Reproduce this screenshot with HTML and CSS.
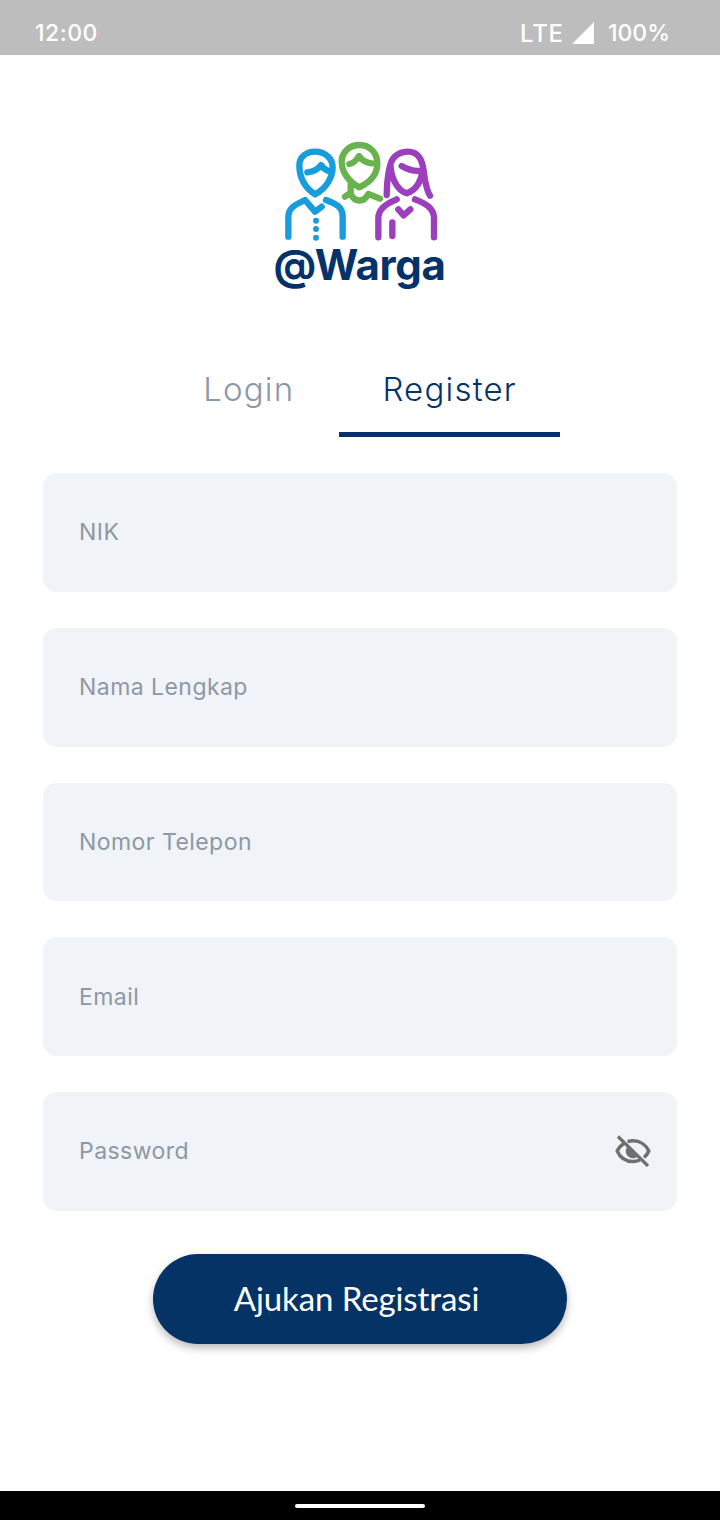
FILE: index.html
```html
<!DOCTYPE html>
<html lang="id">
<head>
<meta charset="utf-8">
<title>@Warga</title>
<link rel="stylesheet" href="styles.css">
</head>
<body>
<div class="screen">
  <header class="status">
    <span class="time">12:00</span>
    <div class="status-right">
      <span class="lte">LTE</span>
      <svg class="signal" viewBox="0 0 22 22"><path d="M22 0V22H0Z"/></svg>
      <span>100%</span>
    </div>
  </header>
  <main class="main">
    <div class="logo">
      <svg class="logo-art" viewBox="0 0 600 345" fill="none" stroke-width="19" stroke-linecap="round" stroke-linejoin="round">
        <g stroke="#189cdc">
          <path d="M165 193C130 170 118 135 118 105C118 80 140 65 165 65C195 65 218 85 218 112C218 140 200 175 165 193Z"/>
          <path d="M142 127C160 125 175 117 183 105C190 116 200 123 216 126"/>
          <path d="M85 320V260C85 235 105 224 135 210L165 245L185 230"/>
          <path d="M198 210C225 220 248 228 248 260V320"/>
          <circle cx="168" cy="272" r="9" fill="#189cdc" stroke="none"/>
          <circle cx="168" cy="297" r="9" fill="#189cdc" stroke="none"/>
          <circle cx="168" cy="323" r="9" fill="#189cdc" stroke="none"/>
        </g>
        <g stroke="#69b34f">
          <path d="M298 172C265 155 245 125 245 95C245 65 270 45 298 45C330 45 352 70 352 100C352 130 335 155 298 172Z"/>
          <path d="M268 102C280 100 290 90 297 78C305 90 318 98 335 100"/>
          <path d="M272 165V188L255 200"/>
          <path d="M272 192C285 218 312 218 325 192L360 206"/>
        </g>
        <g stroke="#9c3fbd">
          <path d="M380 195C380 150 388 100 400 85C415 65 445 60 465 70C490 85 490 120 495 150C500 175 505 190 510 197"/>
          <path d="M392 112C395 150 415 182 440 190C470 180 485 150 487 122"/>
          <path d="M425 108C445 120 465 125 485 122"/>
          <path d="M355 322V265C355 240 372 224 410 208"/>
          <path d="M415 238L431 256L451 238"/>
          <path d="M465 208C500 222 522 235 522 265V322"/>
          <path d="M397 277V318"/>
        </g>
      </svg>
      <span class="wordmark">@Warga</span>
    </div>
    <nav class="tabs">
      <div class="tab">Login</div>
      <div class="tab tab-active">Register</div>
    </nav>
    <form class="form">
      <div class="field">NIK</div>
      <div class="field">Nama Lengkap</div>
      <div class="field">Nomor Telepon</div>
      <div class="field">Email</div>
      <div class="field field-password">
        <span>Password</span>
        <svg class="eye" viewBox="0 0 36 32" fill="none" stroke="#6f6f6f" stroke-width="3.4">
          <path d="M9 8.5C5.5 10.5 3.5 13.500 2.200 16C5 22.500 11 26.500 18 26.500C20.500 26.500 22.800 26 25 25"/>
          <path d="M12.500 6.700C14.300 6.100 16.100 5.800 18 5.800C25 5.800 31 9.800 33.800 16C32.800 18.400 31 20.800 29 22.500"/>
          <path d="M12.500 13C11.800 14 11.500 15 11.500 16C11.500 19.600 14.500 22.500 18 22.500C19 22.500 20 22.300 21 21.800Z" fill="#6f6f6f" stroke-width="1.500"/>
          <path d="M3 1.500L33 31" stroke-width="3.200"/>
        </svg>
      </div>
    </form>
    <button class="submit" type="button">Ajukan Registrasi</button>
  </main>
  <footer class="navbar"><span class="home-pill"></span></footer>
</div>
</body>
</html>
```
FILE: styles.css
```css
* { box-sizing: border-box; }
html, body { margin: 0; padding: 0; }
body { width: 720px; height: 1520px; background: #fff; font-family: "Lato", "Liberation Sans", sans-serif; overflow: hidden; }
.screen { width: 720px; height: 1520px; display: flex; flex-direction: column; }
.status { height: 55px; flex: none; background: #bdbdbd; color: #fff; display: flex; align-items: center; justify-content: space-between; padding: 11px 50px 0 35px; font-family: "Inter", sans-serif; font-size: 23px; font-weight: 500; }
.time { letter-spacing: 0.5px; }
.status-right { display: flex; align-items: center; gap: 11px; }
.lte { font-size: 24px; letter-spacing: 0.8px; }
.signal { width: 22px; height: 22px; fill: #fff; margin: 0 3px 0 -3px; }
.main { flex: 1; display: flex; flex-direction: column; align-items: center; }
.logo { margin-top: 75px; width: 200px; height: 170px; display: flex; flex-direction: column; align-items: center; position: relative; }
.logo-art { width: 200px; height: 115px; display: block; }
.wordmark { position: absolute; left: -1px; right: 0; top: 110px; text-align: center; font-family: "Inter", sans-serif; font-weight: 700; font-size: 42px; line-height: 50px; letter-spacing: -0.4px; color: #06326a; }
.tabs { display: flex; justify-content: center; gap: 2px; margin-top: 67px; height: 70px; width: 100%; }
.tab { padding: 0 43px; height: 70px; font-family: "Inter", sans-serif; font-size: 33px; font-weight: 300; line-height: 44px; letter-spacing: 1.2px; color: #8a97a8; border-bottom: 5px solid transparent; }
.tab-active { color: #06326a; border-bottom-color: #06326a; }
.form { width: 634px; margin-top: 36px; display: flex; flex-direction: column; gap: 36px; }
.field { height: 118.75px; border-radius: 14px; background: #f0f3f8; display: flex; align-items: center; padding: 0 26px 0 36px; font-family: "Inter", sans-serif; font-size: 23px; letter-spacing: 0.45px; color: #8d98a5; }
.field-password { justify-content: space-between; }
.eye { width: 36px; height: 32px; flex: none; }
.submit { margin-top: 43px; width: 414px; height: 90px; padding: 0 7px 2px 0; border: none; border-radius: 45px; background: #063366; color: #fff; font-family: "Lato", sans-serif; font-size: 33px; font-weight: 400; letter-spacing: -0.1px; box-shadow: 0 4px 8px rgba(0,0,0,.28); }
.navbar { height: 29px; flex: none; background: #000; display: flex; align-items: center; justify-content: center; }
.home-pill { width: 130px; height: 4px; border-radius: 2px; background: #fff; }
```
